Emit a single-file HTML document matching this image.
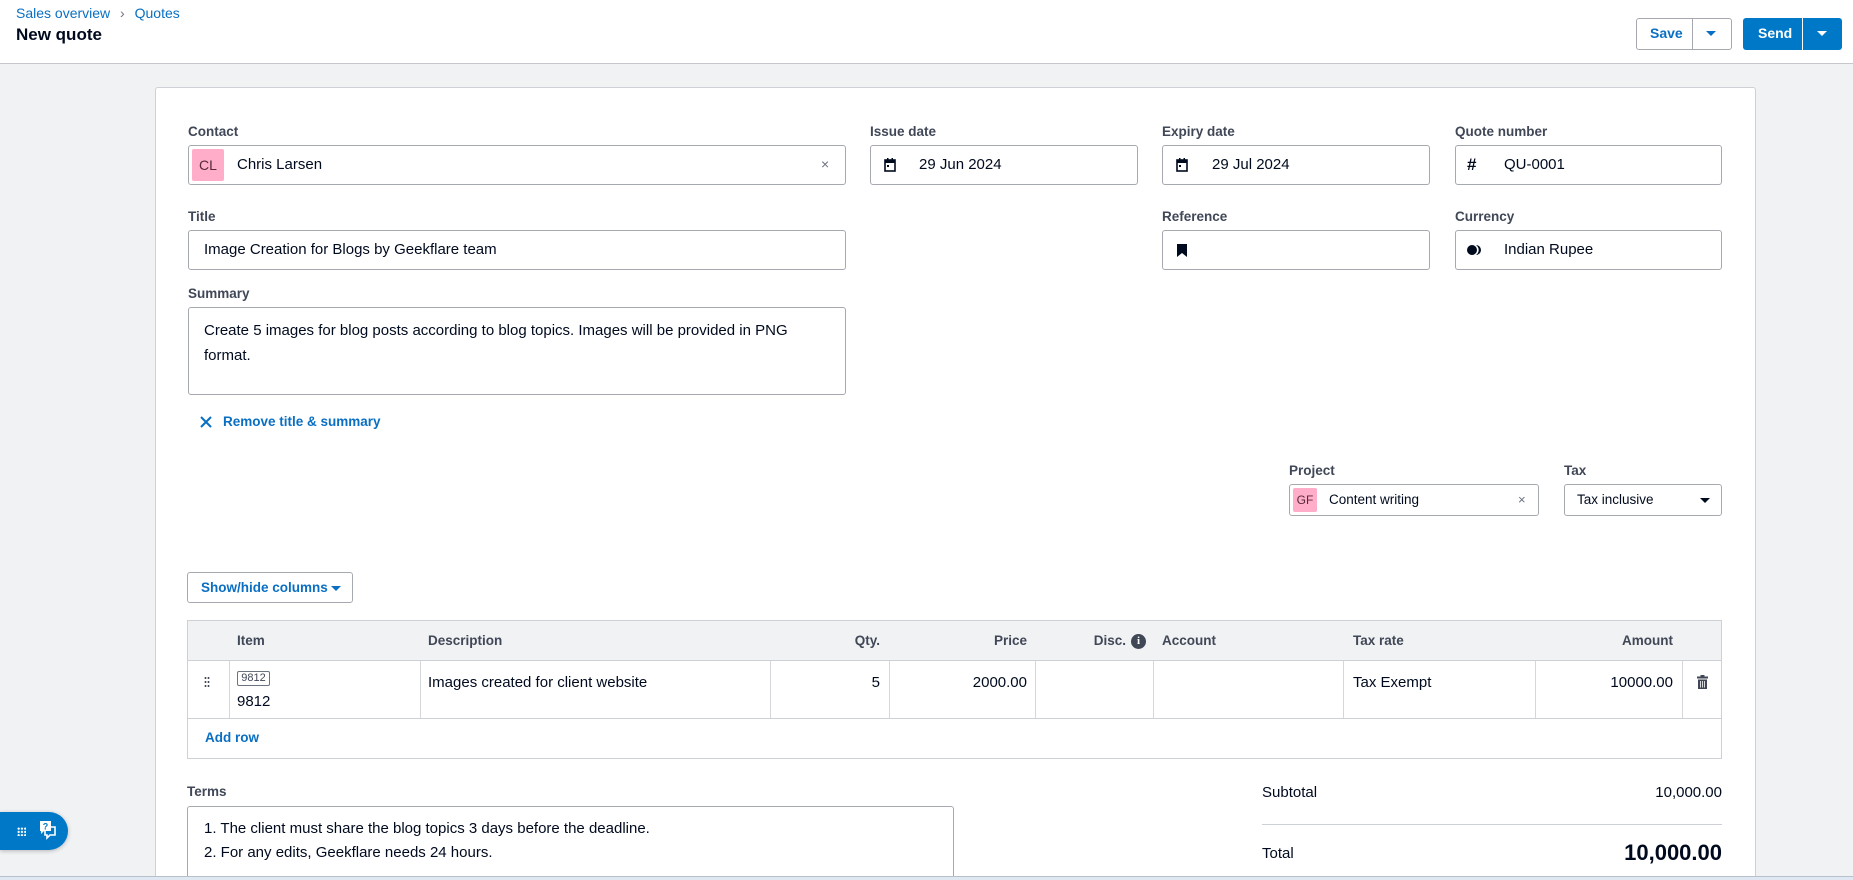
<!DOCTYPE html>
<html style="width:1853px;height:880px;overflow:hidden"><head><meta charset="utf-8"><style>
*{box-sizing:border-box;margin:0;padding:0}
html,body{width:1853px;height:880px;overflow:hidden}
body{background:#f1f2f4;font-family:"Liberation Sans",Arial,sans-serif;color:#000a1e;position:relative;font-size:15px}
.a{position:absolute}
.hdr{left:0;top:0;width:1853px;height:64px;background:#fff;border-bottom:1px solid #c6c8cc}
.pink{left:0;top:0;width:1853px;height:7px;background:#fff3f5}
.card{left:155px;top:87px;width:1601px;height:793px;background:#fff;border:1px solid #cdd0d5;border-bottom:none;border-radius:3px 3px 0 0}
.lbl{font-size:13.5px;font-weight:bold;color:#404756}
.inp{background:#fff;border:1px solid #a6a9b0;border-radius:3px}
.blue{color:#0a6fc2}
.av{background:#ffadc9;color:#59293b;font-size:13px;text-align:center;border-radius:2px}
.th{font-size:13.5px;font-weight:bold;color:#404756;top:633px}
.td{top:674px;font-size:15px}
.vl{width:1px;background:#d5d7da;top:661px;height:57px}
</style></head><body>
<div class="a pink"></div>
<div class="a hdr"></div>
<div class="a blue" style="left:16px;top:5px;font-size:14px">Sales overview <span style="color:#6b7280;margin:0 6px">›</span> Quotes</div>
<div class="a" style="left:16px;top:25px;font-size:17px;font-weight:bold">New quote</div>
<div class="a inp" style="left:1636px;top:18px;width:96px;height:32px;border-color:#a6a9b0"></div>
<div class="a" style="left:1692px;top:18px;width:1px;height:32px;background:#a6a9b0"></div>
<div class="a blue" style="left:1650px;top:25px;font-size:14px;font-weight:bold">Save</div>
<div class="a" style="left:1706px;top:31px;border-left:5px solid transparent;border-right:5px solid transparent;border-top:5px solid #0a6fc2"></div>
<div class="a" style="left:1743px;top:18px;width:99px;height:32px;background:#0078c8;border-radius:3px"></div>
<div class="a" style="left:1802px;top:18px;width:1px;height:32px;background:#fff"></div>
<div class="a" style="left:1758px;top:25px;font-size:14px;font-weight:bold;color:#fff">Send</div>
<div class="a" style="left:1817px;top:31px;border-left:5px solid transparent;border-right:5px solid transparent;border-top:5px solid #fff"></div>

<div class="a card"></div>

<div class="a lbl" style="left:188px;top:124px">Contact</div>
<div class="a inp" style="left:188px;top:145px;width:658px;height:40px"></div>
<div class="a av" style="left:192px;top:149px;width:32px;height:32px;line-height:32px;font-size:14px">CL</div>
<div class="a" style="left:237px;top:156px">Chris Larsen</div>
<div class="a" style="left:821px;top:156px;color:#6b7280;font-size:14px">×</div>

<div class="a lbl" style="left:870px;top:124px">Issue date</div>
<div class="a inp" style="left:870px;top:145px;width:268px;height:40px"></div>
<svg class="a" style="left:884px;top:158px" width="12" height="14" viewBox="0 0 12 14"><rect x="1" y="2" width="10" height="11" fill="none" stroke="#000a1e" stroke-width="1.6"/><rect x="1" y="2" width="10" height="3" fill="#000a1e"/><rect x="3" y="7" width="2" height="2" fill="#000a1e"/><rect x="3" y="0" width="1.5" height="3" fill="#000a1e"/><rect x="7.5" y="0" width="1.5" height="3" fill="#000a1e"/></svg>
<div class="a" style="left:919px;top:156px">29 Jun 2024</div>

<div class="a lbl" style="left:1162px;top:124px">Expiry date</div>
<div class="a inp" style="left:1162px;top:145px;width:268px;height:40px"></div>
<svg class="a" style="left:1176px;top:158px" width="12" height="14" viewBox="0 0 12 14"><rect x="1" y="2" width="10" height="11" fill="none" stroke="#000a1e" stroke-width="1.6"/><rect x="1" y="2" width="10" height="3" fill="#000a1e"/><rect x="3" y="7" width="2" height="2" fill="#000a1e"/><rect x="3" y="0" width="1.5" height="3" fill="#000a1e"/><rect x="7.5" y="0" width="1.5" height="3" fill="#000a1e"/></svg>
<div class="a" style="left:1212px;top:156px">29 Jul 2024</div>

<div class="a lbl" style="left:1455px;top:124px">Quote number</div>
<div class="a inp" style="left:1455px;top:145px;width:267px;height:40px"></div>
<div class="a" style="left:1467px;top:155px;font-size:17px;font-weight:bold">#</div>
<div class="a" style="left:1504px;top:156px">QU-0001</div>

<div class="a lbl" style="left:188px;top:209px">Title</div>
<div class="a inp" style="left:188px;top:230px;width:658px;height:40px"></div>
<div class="a" style="left:204px;top:241px">Image Creation for Blogs by Geekflare team</div>

<div class="a lbl" style="left:1162px;top:209px">Reference</div>
<div class="a inp" style="left:1162px;top:230px;width:268px;height:40px"></div>
<svg class="a" style="left:1177px;top:244px" width="10" height="13" viewBox="0 0 10 13"><path d="M0 0H10V13L5 9L0 13Z" fill="#000a1e"/></svg>

<div class="a lbl" style="left:1455px;top:209px">Currency</div>
<div class="a inp" style="left:1455px;top:230px;width:267px;height:40px"></div>
<svg class="a" style="left:1467px;top:244px" width="14" height="12" viewBox="0 0 14 12"><circle cx="5" cy="6" r="5" fill="#000a1e"/><path d="M9 1A5 5 0 0 1 9 11A6 6 0 0 0 9 1Z" fill="#000a1e"/></svg>
<div class="a" style="left:1504px;top:241px">Indian Rupee</div>

<div class="a lbl" style="left:188px;top:286px">Summary</div>
<div class="a inp" style="left:188px;top:307px;width:658px;height:88px"></div>
<div class="a" style="left:204px;top:318px;line-height:25px;width:630px">Create 5 images for blog posts according to blog topics. Images will be provided in PNG format.</div>

<svg class="a" style="left:200px;top:416px" width="12" height="12" viewBox="0 0 12 12"><path d="M1 1L11 11M11 1L1 11" stroke="#0a6fc2" stroke-width="2"/></svg>
<div class="a blue" style="left:223px;top:414px;font-size:13.5px;font-weight:bold">Remove title &amp; summary</div>

<div class="a lbl" style="left:1289px;top:463px">Project</div>
<div class="a inp" style="left:1289px;top:484px;width:250px;height:32px"></div>
<div class="a av" style="left:1293px;top:488px;width:24px;height:24px;line-height:24px;font-size:12px">GF</div>
<div class="a" style="left:1329px;top:492px;font-size:13.5px">Content writing</div>
<div class="a" style="left:1518px;top:492px;color:#6b7280;font-size:13px">×</div>

<div class="a lbl" style="left:1564px;top:463px">Tax</div>
<div class="a inp" style="left:1564px;top:484px;width:158px;height:32px"></div>
<div class="a" style="left:1577px;top:492px;font-size:13.5px">Tax inclusive</div>
<div class="a" style="left:1700px;top:498px;border-left:5px solid transparent;border-right:5px solid transparent;border-top:5px solid #000a1e"></div>

<div class="a inp" style="left:187px;top:572px;width:166px;height:31px"></div>
<div class="a blue" style="left:201px;top:580px;font-size:13.5px;font-weight:bold">Show/hide columns</div>
<div class="a" style="left:331px;top:586px;border-left:5px solid transparent;border-right:5px solid transparent;border-top:5px solid #0a6fc2"></div>

<div class="a" style="left:187px;top:620px;width:1535px;height:139px;border:1px solid #cdd0d5;background:#fff"></div>
<div class="a" style="left:188px;top:621px;width:1533px;height:40px;background:#f1f2f4;border-bottom:1px solid #cdd0d5"></div>
<div class="a" style="left:188px;top:718px;width:1533px;height:1px;background:#cdd0d5"></div>
<div class="a vl" style="left:229px"></div><div class="a vl" style="left:420px"></div><div class="a vl" style="left:770px"></div><div class="a vl" style="left:889px"></div><div class="a vl" style="left:1035px"></div><div class="a vl" style="left:1153px"></div><div class="a vl" style="left:1343px"></div><div class="a vl" style="left:1535px"></div><div class="a vl" style="left:1682px"></div>
<div class="a th" style="left:237px">Item</div>
<div class="a th" style="left:428px">Description</div>
<div class="a th" style="left:800px;width:80px;text-align:right">Qty.</div>
<div class="a th" style="left:930px;width:97px;text-align:right">Price</div>
<div class="a th" style="left:1060px;width:66px;text-align:right">Disc.</div>
<div class="a" style="left:1131px;top:634px;width:15px;height:15px;border-radius:50%;background:#404756;color:#fff;font-size:11px;font-weight:bold;text-align:center;line-height:15px;font-family:'Liberation Serif',serif">i</div>
<div class="a th" style="left:1162px">Account</div>
<div class="a th" style="left:1353px">Tax rate</div>
<div class="a th" style="left:1550px;width:123px;text-align:right">Amount</div>

<div class="a" style="left:204px;top:676px;width:6px;height:12px;background:radial-gradient(circle,#404756 0.9px,transparent 1.1px) 0 0/3px 4px"></div>
<div class="a" style="left:237px;top:671px;width:33px;height:15px;border:1px solid #6b7280;border-radius:2px;font-size:11px;text-align:center;line-height:13px;color:#404756">9812</div>
<div class="a" style="left:237px;top:693px;font-size:15px">9812</div>
<div class="a td" style="left:428px">Images created for client website</div>
<div class="a td" style="left:800px;width:80px;text-align:right">5</div>
<div class="a td" style="left:930px;width:97px;text-align:right">2000.00</div>
<div class="a td" style="left:1353px">Tax Exempt</div>
<div class="a td" style="left:1550px;width:123px;text-align:right">10000.00</div>
<svg class="a" style="left:1697px;top:675px" width="11" height="14" viewBox="0 0 11 14"><rect x="0" y="1.5" width="11" height="2" fill="#404756"/><rect x="3.5" y="0" width="4" height="2" fill="#404756"/><path d="M1 4.5H10V14H1Z" fill="#404756"/><path d="M3.5 6V12.5M5.5 6V12.5M7.5 6V12.5" stroke="#fff" stroke-width="0.8"/></svg>
<div class="a blue" style="left:205px;top:730px;font-size:13.5px;font-weight:bold">Add row</div>

<div class="a lbl" style="left:187px;top:784px">Terms</div>
<div class="a inp" style="left:187px;top:806px;width:767px;height:74px;border-bottom:none;border-radius:3px 3px 0 0"></div>
<div class="a" style="left:204px;top:817px;font-size:15px;line-height:24px">1. The client must share the blog topics 3 days before the deadline.<br>2. For any edits, Geekflare needs 24 hours.</div>

<div class="a" style="left:1262px;top:784px">Subtotal</div>
<div class="a" style="left:1500px;top:784px;width:222px;text-align:right">10,000.00</div>
<div class="a" style="left:1262px;top:824px;width:460px;height:1px;background:#cdd0d5"></div>
<div class="a" style="left:1262px;top:845px">Total</div>
<div class="a" style="left:1500px;top:840px;width:222px;text-align:right;font-size:22px;font-weight:bold">10,000.00</div>

<div class="a" style="left:0;top:876px;width:1853px;height:4px;background:#dfe7f3;border-top:1px solid #b8c0cc"></div>

<div class="a" style="left:0;top:812px;width:68px;height:38px;background:#0078c8;border-radius:0 19px 19px 0;box-shadow:0 1px 4px rgba(0,0,0,.25)"></div>
<div class="a" style="left:17px;top:827px;width:9px;height:9px;background:radial-gradient(circle,#fff 1px,transparent 1.2px) 0 0/3.3px 3.3px"></div>
<svg class="a" style="left:38px;top:820px" width="20" height="20" viewBox="0 0 20 20"><path d="M7 7H17V15H12L9 18V15H7Z" fill="none" stroke="#fff" stroke-width="1.6"/><path d="M2 1H13V11H6L3 14V11H2Z" fill="#fff"/><text x="7.5" y="9.5" font-size="9" font-weight="bold" fill="#0078c8" text-anchor="middle" font-family="Liberation Sans">?</text></svg>
</body></html>
